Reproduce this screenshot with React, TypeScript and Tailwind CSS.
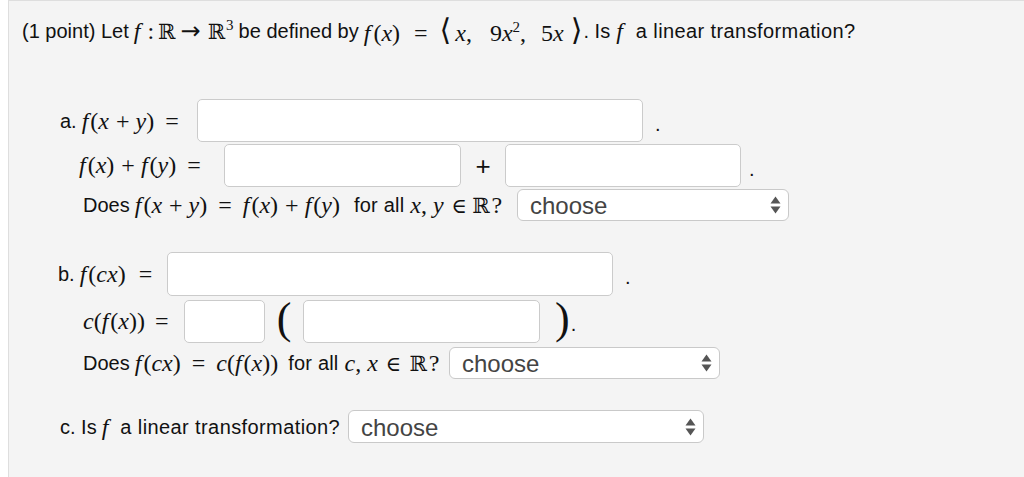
import React from "react";

const M = ({ children, className = "" }: { children: React.ReactNode; className?: string }) => (
  <span className={"font-['Liberation_Serif','DejaVu_Serif',serif] text-[24px] leading-none " + className}>{children}</span>
);
const I = ({ children, className = "" }: { children: React.ReactNode; className?: string }) => (
  <i className={"italic " + className}>{children}</i>
);
const F = ({ className = "pr-[2px]" }: { className?: string }) => <i className={"italic " + className}>f</i>;
const R = ({ className = "" }: { className?: string }) => (
  <span className={"font-['DejaVu_Serif',serif] not-italic text-[21px] " + className}>ℝ</span>
);
const In = ({ className = "" }: { className?: string }) => (
  <span className={"font-['DejaVu_Serif',serif] text-[21px] " + className}>∈</span>
);

const Box = ({ w }: { w: string }) => (
  <div className={"h-full bg-white border border-[#cbcbcb] rounded-[5px] " + w} />
);

const Select = ({ w }: { w: string }) => (
  <div className={"h-full bg-white border border-[#c9c9c9] rounded-[6px] flex items-center justify-between pl-[12px] pr-[7px] " + w}>
    <span className="text-[24px] text-[#444] leading-none font-['Liberation_Sans',Arial,sans-serif] relative top-[1px]">choose</span>
    <svg width="11" height="20" viewBox="0 0 11 20">
      <path d="M5.5 1.5 L10.5 8.5 L0.5 8.5 Z" fill="#555" />
      <path d="M5.5 18.5 L10.5 11.5 L0.5 11.5 Z" fill="#555" />
    </svg>
  </div>
);

export default function App() {
  return (
    <div className="w-[1024px] h-[477px] bg-white flex font-['Liberation_Sans',Arial,sans-serif] text-[20px] text-[#111] overflow-hidden">
      <div className="ml-[8px] flex-1 bg-[#f4f4f4] border-l border-t border-[#dedede] pl-[13px] pt-[17px]">
        {/* Title */}
        <div className="h-[26px] flex items-center whitespace-nowrap">
          <span>(1 point) Let</span>
          <M className="ml-[5px]">
            <F />
            <span className="ml-[5px]">:</span>
            <R className="ml-[4px]" />
            <span className="ml-[5px] font-['DejaVu_Sans',sans-serif] text-[24px]">→</span>
            <R className="ml-[7px]" />
            <sup className="text-[15px] relative -top-[9px] ml-[1px]">3</sup>
          </M>
          <span className="ml-[5px]">be defined by</span>
          <M className="ml-[5px]">
            <F className="pr-[3px]" />(<I>x</I>)
            <span className="ml-[14px] mr-[12px]">=</span>
            <span className="text-[30px] font-['DejaVu_Serif',serif] relative -top-[1px] mr-[4px]">⟨</span>
            <I>x</I>,<span className="ml-[18px]">9</span><I>x</I>
            <sup className="text-[15px] relative -top-[9px]">2</sup>,<span className="ml-[15px]">5</span><I>x</I>
            <span className="text-[30px] font-['DejaVu_Serif',serif] relative -top-[1px] ml-[7px]">⟩</span>
          </M>
          <span className="ml-[1px]">. Is</span>
          <M className="ml-[6px]"><F /></M>
          <span className="ml-[11px] tracking-[0.4px]">a linear transformation?</span>
        </div>

        {/* a */}
        <div className="mt-[55px] h-[43px] flex items-center pl-[38px] whitespace-nowrap">
          <div className="w-[137px] flex items-center">
            <span>a.</span>
            <M className="ml-[5px]">
              <F />(<I>x</I><span className="ml-[7px] mr-[6px]">+</span><I>y</I>)<span className="ml-[11px]">=</span>
            </M>
          </div>
          <Box w="w-[446px]" />
          <span className="ml-[12px] self-end mb-[8px] leading-none">.</span>
        </div>
        <div className="mt-[2px] h-[43px] flex items-center pl-[57px] whitespace-nowrap">
          <div className="w-[145px]">
            <M>
              <F />(<I>x</I>)<span className="ml-[7px] mr-[6px]">+</span><F />(<I>y</I>)<span className="ml-[11px]">=</span>
            </M>
          </div>
          <Box w="w-[237px]" />
          <span className="w-[44px] text-center text-[26px] leading-none">+</span>
          <Box w="w-[236px]" />
          <span className="ml-[8px] self-end mb-[8px] leading-none">.</span>
        </div>
        <div className="mt-[2px] h-[32px] flex items-center pl-[61px] whitespace-nowrap">
          <div className="w-[434px] flex items-center">
            <span>Does</span>
            <M className="ml-[5px]">
              <F />(<I>x</I><span className="ml-[7px] mr-[6px]">+</span><I>y</I>)<span className="mx-[11px]">=</span><F />(<I>x</I>)<span className="ml-[7px] mr-[6px]">+</span><F />(<I>y</I>)
            </M>
            <span className="ml-[14px] tracking-[0.2px]">for all</span>
            <M className="ml-[6px]">
              <I>x</I>,<I className="ml-[6px]">y</I><In className="ml-[8px]" /><R className="ml-[5px]" /><span className="ml-[2px]">?</span>
            </M>
          </div>
          <Select w="w-[272px]" />
        </div>

        {/* b */}
        <div className="mt-[31px] h-[44px] flex items-center pl-[36px] whitespace-nowrap">
          <div className="w-[109px] flex items-center">
            <span>b.</span>
            <M className="ml-[5px]">
              <F />(<I>cx</I>)<span className="ml-[13px]">=</span>
            </M>
          </div>
          <Box w="w-[446px]" />
          <span className="ml-[12px] self-end mb-[9px] leading-none">.</span>
        </div>
        <div className="mt-[4px] h-[43px] flex items-center pl-[61px] whitespace-nowrap">
          <div className="w-[101px]">
            <M>
              <I>c</I>(<F />(<I>x</I>))<span className="ml-[10px]">=</span>
            </M>
          </div>
          <Box w="w-[81px]" />
          <span className="w-[38px] text-center font-['Liberation_Serif',serif] text-[44px] leading-none relative -top-[3px]">(</span>
          <Box w="w-[237px]" />
          <span className="ml-[15px] font-['Liberation_Serif',serif] text-[44px] leading-none relative -top-[3px]">)</span>
          <span className="ml-[1px] self-end mb-[9px] leading-none">.</span>
        </div>
        <div className="mt-[4px] h-[32px] flex items-center pl-[61px] whitespace-nowrap">
          <div className="w-[366px] flex items-center">
            <span>Does</span>
            <M className="ml-[5px]">
              <F />(<I>cx</I>)<span className="mx-[11px]">=</span><I>c</I>(<F />(<I>x</I>))
            </M>
            <span className="ml-[10px] tracking-[0.2px]">for all</span>
            <M className="ml-[6px]">
              <I>c</I>,<I className="ml-[6px]">x</I><In className="ml-[8px]" /><R className="ml-[8px]" /><span className="ml-[2px]">?</span>
            </M>
          </div>
          <Select w="w-[271px]" />
        </div>

        {/* c */}
        <div className="mt-[31px] h-[33px] flex items-center pl-[38px] whitespace-nowrap">
          <div className="w-[288px] flex items-center">
            <span>c. Is</span>
            <M className="ml-[5px]"><F /></M>
            <span className="ml-[10px] tracking-[0.4px]">a linear transformation?</span>
          </div>
          <Select w="w-[356px]" />
        </div>
      </div>
    </div>
  );
}
